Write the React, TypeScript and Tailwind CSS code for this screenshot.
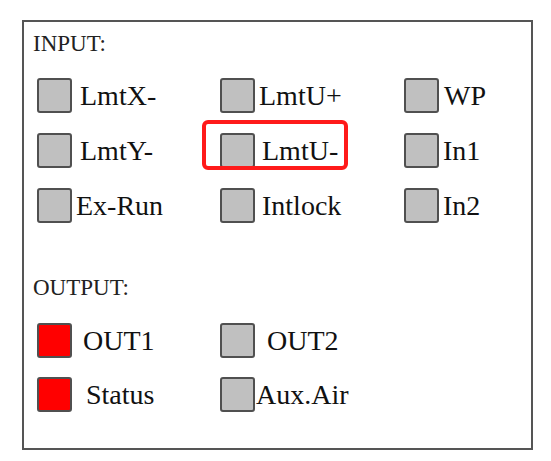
type Item = { label: string; gap: string; on?: boolean };

const inputs: Item[] = [
  { label: "LmtX-", gap: "ml-[8px]" },
  { label: "LmtU+", gap: "ml-[4px]" },
  { label: "WP", gap: "ml-[5px]" },
  { label: "LmtY-", gap: "ml-[8px]" },
  { label: "LmtU-", gap: "ml-[7px]" },
  { label: "In1", gap: "ml-[4px]" },
  { label: "Ex-Run", gap: "ml-[4px]" },
  { label: "Intlock", gap: "ml-[7px]" },
  { label: "In2", gap: "ml-[4px]" },
];

const outputs: Item[] = [
  { label: "OUT1", gap: "ml-[11px]", on: true },
  { label: "OUT2", gap: "ml-[12px]" },
  { label: "Status", gap: "ml-[14px]", on: true },
  { label: "Aux.Air", gap: "ml-[1px]" },
];

function Led({ item }: { item: Item }) {
  return (
    <div className="flex items-center h-[35px]">
      <span
        className={`w-[35px] h-[35px] shrink-0 rounded-[3px] border-2 border-[#505050] ${
          item.on ? "bg-[#ff0000]" : "bg-[#c0c0c0]"
        }`}
      />
      <span className={`${item.gap} text-[28px] leading-none text-[#111]`}>{item.label}</span>
    </div>
  );
}

export default function App() {
  return (
    <div className="w-[551px] h-[461px] bg-white pt-[20px] pl-[22px] font-['Liberation_Serif',serif]">
      <div className="relative w-[511px] h-[430px] border-2 border-[#555] pl-[13px] pt-[10px]">
        <div className="-ml-[4px] text-[23px] leading-none text-[#222]">INPUT:</div>
        <div className="mt-[23px] grid grid-cols-[183px_184px_1fr] gap-y-[20px]">
          {inputs.map((it) => (
            <Led key={it.label} item={it} />
          ))}
        </div>
        <div className="mt-[53px] -ml-[4px] text-[23px] leading-none text-[#222]">OUTPUT:</div>
        <div className="mt-[24px] grid grid-cols-[183px_1fr] gap-y-[19px]">
          {outputs.map((it) => (
            <Led key={it.label} item={it} />
          ))}
        </div>
        {/* highlight around the selected input */}
        <div className="absolute left-[178px] top-[98px] w-[146px] h-[50px] border-4 border-[#ff1a1a] rounded-[6px]" />
      </div>
    </div>
  );
}
